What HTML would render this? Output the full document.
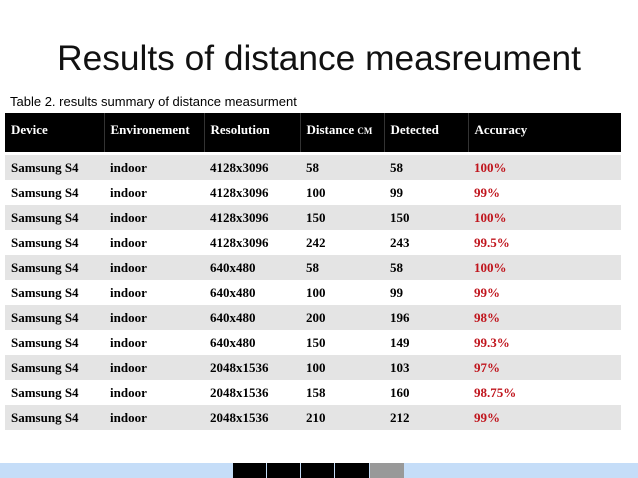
<!DOCTYPE html>
<html><head><style>
body{margin:0;width:638px;height:478px;background:#fff;position:relative;overflow:hidden;font-family:"Liberation Sans",sans-serif}
h1{position:absolute;left:0;width:638px;top:39px;margin:0;text-align:center;font-weight:normal;font-size:35.3px;color:#111}
.cap{position:absolute;left:10px;top:94px;font-size:13px;color:#000}
table{position:absolute;left:5px;top:113px;width:616px;border-collapse:collapse;font-family:"Liberation Serif",serif;font-weight:bold;font-size:13px}
td{padding:0 0 0 6px;height:25px}
tr.h td{background:#000;color:#fff;height:39px;border-left:1px solid #333;padding-bottom:6px;height:33px}
tr.h td:first-child{border-left:none}
tr.sp td{height:3px;padding:0}
tr:nth-child(odd):not(.h) td{background:#e4e4e4}
td.r{color:#c0141c}
.bar{position:absolute;left:0;top:463px;width:638px;height:15px;background:#c5ddf8}
.b{position:absolute;top:463px;height:15px;width:33px;background:#000}
</style></head><body>
<h1>Results of distance measreument</h1>
<div class="cap">Table 2. results summary of distance measurment</div>
<table>
<colgroup><col style="width:99px"><col style="width:100px"><col style="width:96px"><col style="width:84px"><col style="width:84px"><col></colgroup>
<tr class="h"><td>Device</td><td>Environement</td><td>Resolution</td><td>Distance <span style="font-size:9px">CM</span></td><td>Detected</td><td>Accuracy</td></tr>
<tr class="sp"><td colspan="6" style="background:#fff"></td></tr>
<tr><td>Samsung S4</td><td>indoor</td><td>4128x3096</td><td>58</td><td>58</td><td class="r">100%</td></tr>
<tr><td>Samsung S4</td><td>indoor</td><td>4128x3096</td><td>100</td><td>99</td><td class="r">99%</td></tr>
<tr><td>Samsung S4</td><td>indoor</td><td>4128x3096</td><td>150</td><td>150</td><td class="r">100%</td></tr>
<tr><td>Samsung S4</td><td>indoor</td><td>4128x3096</td><td>242</td><td>243</td><td class="r">99.5%</td></tr>
<tr><td>Samsung S4</td><td>indoor</td><td>640x480</td><td>58</td><td>58</td><td class="r">100%</td></tr>
<tr><td>Samsung S4</td><td>indoor</td><td>640x480</td><td>100</td><td>99</td><td class="r">99%</td></tr>
<tr><td>Samsung S4</td><td>indoor</td><td>640x480</td><td>200</td><td>196</td><td class="r">98%</td></tr>
<tr><td>Samsung S4</td><td>indoor</td><td>640x480</td><td>150</td><td>149</td><td class="r">99.3%</td></tr>
<tr><td>Samsung S4</td><td>indoor</td><td>2048x1536</td><td>100</td><td>103</td><td class="r">97%</td></tr>
<tr><td>Samsung S4</td><td>indoor</td><td>2048x1536</td><td>158</td><td>160</td><td class="r">98.75%</td></tr>
<tr><td>Samsung S4</td><td>indoor</td><td>2048x1536</td><td>210</td><td>212</td><td class="r">99%</td></tr>
</table>
<div class="bar"></div>
<div class="b" style="left:233px"></div><div class="b" style="left:267px"></div><div class="b" style="left:301px"></div><div class="b" style="left:335px;width:34px"></div>
<div class="b" style="left:370px;width:34px;background:#999"></div>
</body></html>
